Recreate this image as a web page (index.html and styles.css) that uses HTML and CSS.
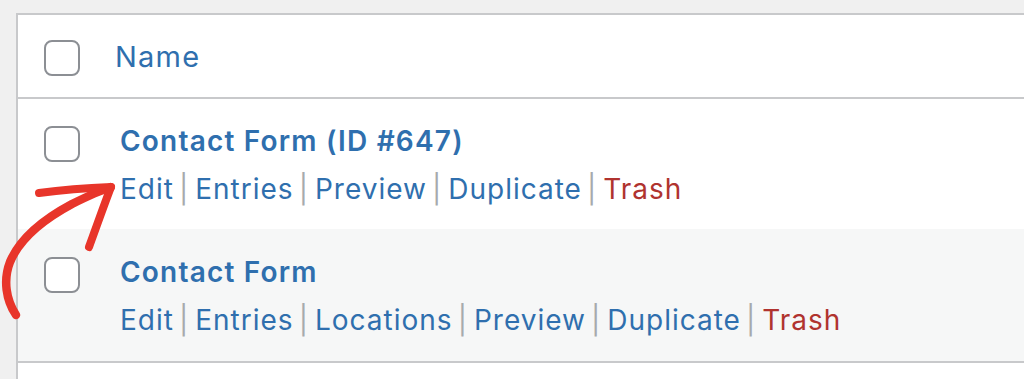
FILE: index.html
```html
<!DOCTYPE html>
<html lang="en">
<head>
<meta charset="utf-8">
<title>Forms</title>
<link rel="stylesheet" href="styles.css">
</head>
<body>
<div class="page">
  <div class="table">
    <div class="row head">
      <span class="cb"></span>
      <span class="col-name">Name</span>
    </div>
    <div class="row item">
      <span class="cb"></span>
      <div class="cell">
        <div class="title">Contact Form (ID #647)</div>
        <div class="actions">
          <span class="a">Edit</span><span class="sep">|</span><span class="a">Entries</span><span class="sep">|</span><span class="a">Preview</span><span class="sep">|</span><span class="a">Duplicate</span><span class="sep">|</span><span class="a trash">Trash</span>
        </div>
      </div>
    </div>
    <div class="row item alt">
      <span class="cb"></span>
      <div class="cell">
        <div class="title">Contact Form</div>
        <div class="actions">
          <span class="a">Edit</span><span class="sep">|</span><span class="a">Entries</span><span class="sep">|</span><span class="a">Locations</span><span class="sep">|</span><span class="a">Preview</span><span class="sep">|</span><span class="a">Duplicate</span><span class="sep">|</span><span class="a trash">Trash</span>
        </div>
      </div>
    </div>
  </div>
  <svg class="arrow" width="130" height="330" viewBox="0 0 130 330" xmlns="http://www.w3.org/2000/svg">
    <path d="M16 315 C 6 300, 3 280, 10 262 C 20 238, 44 219, 72 204 C 86 197, 98 191, 110 188" fill="none" stroke="#e8352a" stroke-width="8.5" stroke-linecap="round"/>
    <path d="M39 193 C 62 190, 88 188, 111 187" fill="none" stroke="#e8352a" stroke-width="8" stroke-linecap="round"/>
    <path d="M111 187 C 104 205, 96 228, 89 247" fill="none" stroke="#e8352a" stroke-width="8" stroke-linecap="round"/>
  </svg>
</div>
</body>
</html>
```

FILE: styles.css
```css
html, body {
  margin: 0;
  padding: 0;
  background: #f0f0f0;
  overflow: hidden;
}
.page {
  position: relative;
  width: 1024px;
  height: 379px;
  padding: 13px 0 0 16px;
  box-sizing: border-box;
  overflow: hidden;
  font-family: Inter, "Liberation Sans", sans-serif;
}
.table {
  width: 1040px;
  height: 366px;
  box-sizing: border-box;
  background: #fff;
  border-top: 2px solid #c8c9cb;
  border-left: 2px solid #c8c9cb;
}
.row {
  display: flex;
  align-items: flex-start;
  box-sizing: border-box;
}
.head {
  height: 84px;
  align-items: center;
  border-bottom: 2px solid #c8c9cb;
  padding-left: 26px;
}
.cb {
  flex: none;
  width: 36px;
  height: 36px;
  box-sizing: border-box;
  border: 2px solid #8c8f94;
  border-radius: 8px;
  background: #fff;
}
.head .cb {
  margin-top: 4px;
}
.col-name {
  margin-left: 35px;
  color: #2f6fae;
  font-size: 29px;
  letter-spacing: 1.2px;
  line-height: 1;
}
.item {
  height: 130px;
  padding: 27px 0 0 26px;
}
.item.alt {
  height: 134px;
  padding-top: 28px;
  background: #f6f7f7;
  border-bottom: 2px solid #c8c9cb;
}
.cell {
  margin-left: 40px;
  margin-top: -2px;
}
.title {
  color: #2f6fae;
  font-weight: 600;
  font-size: 28px;
  letter-spacing: 1.2px;
  line-height: 34px;
}
.actions {
  margin-top: 14px;
  font-size: 28px;
  letter-spacing: 1px;
  line-height: 34px;
  color: #2f6fae;
  white-space: nowrap;
}
.sep {
  color: #a7aaad;
  margin: 0 6px 0 5px;
}
.trash {
  color: #b0332f;
}
.arrow {
  position: absolute;
  left: 0;
  top: 0;
}
```
